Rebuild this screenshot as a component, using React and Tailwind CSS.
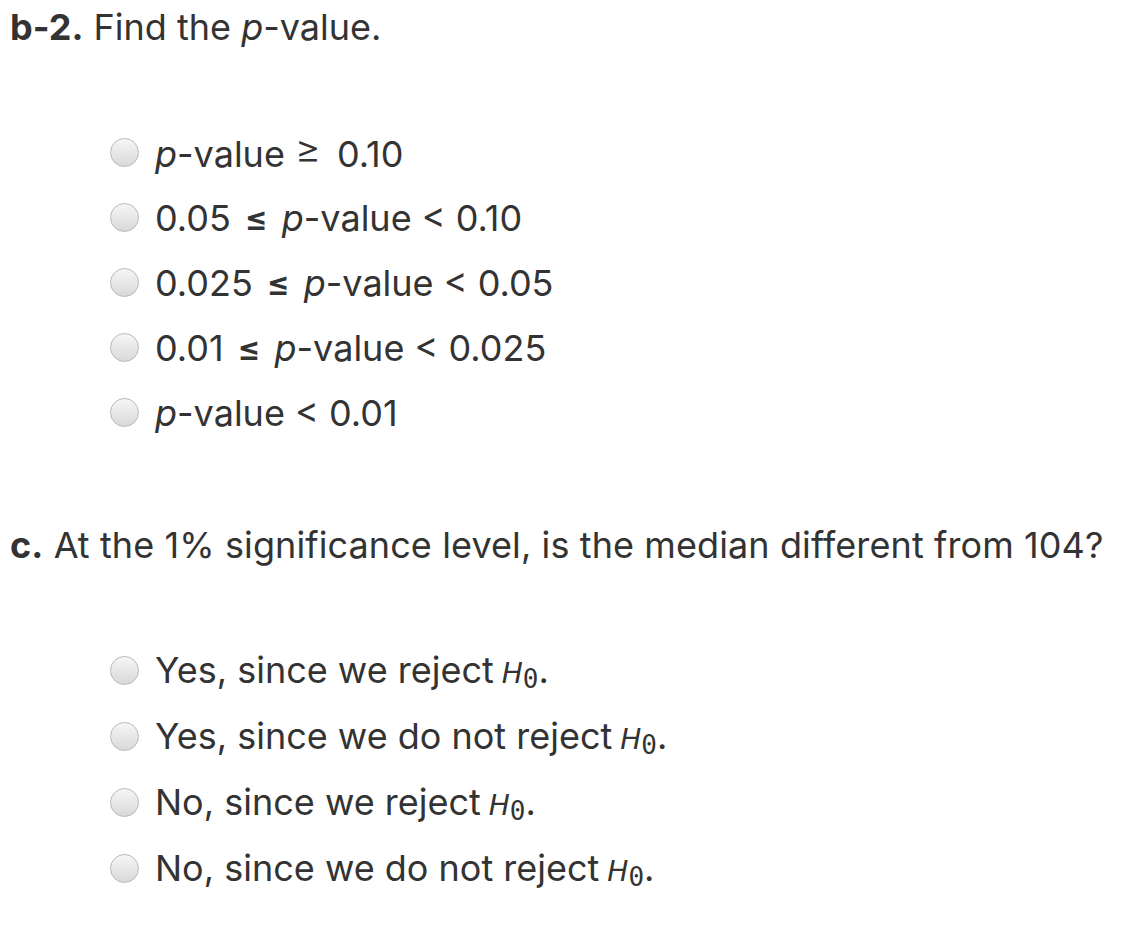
import React from "react";

function Radio() {
  return (
    <span className="inline-block w-[29px] h-[29px] shrink-0 rounded-full border border-[#b9b9b9] bg-gradient-to-b from-[#f6f6f6] to-[#d9d9d9]" />
  );
}

const P = () => <i className="italic">p</i>;

const Le = () => <span className="text-[34px] font-semibold ml-[14px] mr-[14px] text-[#333]">≤</span>;

const H0 = () => (
  <span className="text-[28px] ml-[8px]" style={{ fontFamily: "'DejaVu Sans', sans-serif" }}>
    <i>H</i>
    <span className="text-[26px] relative top-[5px]" style={{ fontFamily: "'DejaVu Sans Mono', monospace" }}>0</span>
  </span>
);

const partB = [
  <>
    <P />-value<span className="text-[40px] font-light relative top-[-4px] ml-[10px] mr-[16px]">≥</span>0.10
  </>,
  <>
    0.05<Le />
    <P />-value &lt; 0.10
  </>,
  <>
    0.025<Le />
    <P />-value &lt; 0.05
  </>,
  <>
    0.01<Le />
    <P />-value &lt; 0.025
  </>,
  <>
    <P />-value &lt; 0.01
  </>,
];

const partC = [
  <>Yes, since we reject<H0 />.</>,
  <>Yes, since we do not reject<H0 />.</>,
  <>No, since we reject<H0 />.</>,
  <>No, since we do not reject<H0 />.</>,
];

export default function App() {
  return (
    <div className="min-h-screen bg-white text-[#333] px-[10px] pt-[6px]" style={{ fontFamily: "Inter, 'Liberation Sans', sans-serif" }}>
      <h1 className="text-[36px] leading-[42px] font-normal">
        <b className="font-bold">b-2.</b> Find the <i>p</i>-value.
      </h1>

      <div className="mt-[72px] pl-[100px] flex flex-col">
        {partB.map((t, i) => (
          <label key={i} className="flex items-center h-[65px] gap-[16px] text-[36px]">
            <Radio />
            <span>{t}</span>
          </label>
        ))}
      </div>

      <h2 className="mt-[79px] text-[36px] leading-[42px] font-normal tracking-[0.1px]">
        <b className="font-bold">c.</b> At the 1% significance level, is the median different from 104?
      </h2>

      <div className="mt-[71px] pl-[100px] flex flex-col">
        {partC.map((t, i) => (
          <label key={i} className="flex items-center h-[66px] gap-[16px] text-[36px]">
            <Radio />
            <span>{t}</span>
          </label>
        ))}
      </div>
    </div>
  );
}
